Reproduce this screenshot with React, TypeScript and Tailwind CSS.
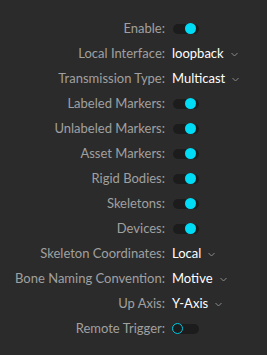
import React from 'react';

type Row = { label: string; toggle?: boolean; value?: string };

const rows: Row[] = [
  { label: 'Enable', toggle: true },
  { label: 'Local Interface', value: 'loopback' },
  { label: 'Transmission Type', value: 'Multicast' },
  { label: 'Labeled Markers', toggle: true },
  { label: 'Unlabeled Markers', toggle: true },
  { label: 'Asset Markers', toggle: true },
  { label: 'Rigid Bodies', toggle: true },
  { label: 'Skeletons', toggle: true },
  { label: 'Devices', toggle: true },
  { label: 'Skeleton Coordinates', value: 'Local' },
  { label: 'Bone Naming Convention', value: 'Motive' },
  { label: 'Up Axis', value: 'Y-Axis' },
  { label: 'Remote Trigger', toggle: false },
];

function Toggle({ on }: { on: boolean }) {
  return (
    <div className="relative w-[26px] h-[10px] rounded-full bg-[#1c1c1c]">
      {on ? (
        <div className="absolute right-[3px] top-[-1px] w-[11px] h-[11px] rounded-full bg-[#00dcf5]" />
      ) : (
        <div className="absolute left-[-1px] top-[-1px] w-[11px] h-[11px] rounded-full border-[1.5px] border-[#00c8e0]" />
      )}
    </div>
  );
}

function Chevron() {
  return (
    <svg width="7" height="5" viewBox="0 0 7 5" className="ml-[7px] mt-[2px]">
      <path d="M0.5 1 L3.5 4 L6.5 1" fill="none" stroke="#8a8a8a" strokeWidth="1" />
    </svg>
  );
}

export default function App() {
  return (
    <div className="w-[267px] h-[355px] bg-[#2b2b2b] pt-[16px]" style={{ fontFamily: 'Lato, "Open Sans", sans-serif' }}>
      <div className="grid grid-cols-[165px_1fr] gap-x-[7px]">
        {rows.map((r) => (
          <React.Fragment key={r.label}>
            <div className="h-[25px] flex items-center justify-end text-[13px] text-[#a0a0a0]">{r.label}:</div>
            <div className="h-[25px] flex items-center">
              {r.value ? (
                <>
                  <span className="text-[13px] text-white">{r.value}</span>
                  <Chevron />
                </>
              ) : (
                <div className="ml-[1px]">
                  <Toggle on={!!r.toggle} />
                </div>
              )}
            </div>
          </React.Fragment>
        ))}
      </div>
    </div>
  );
}
